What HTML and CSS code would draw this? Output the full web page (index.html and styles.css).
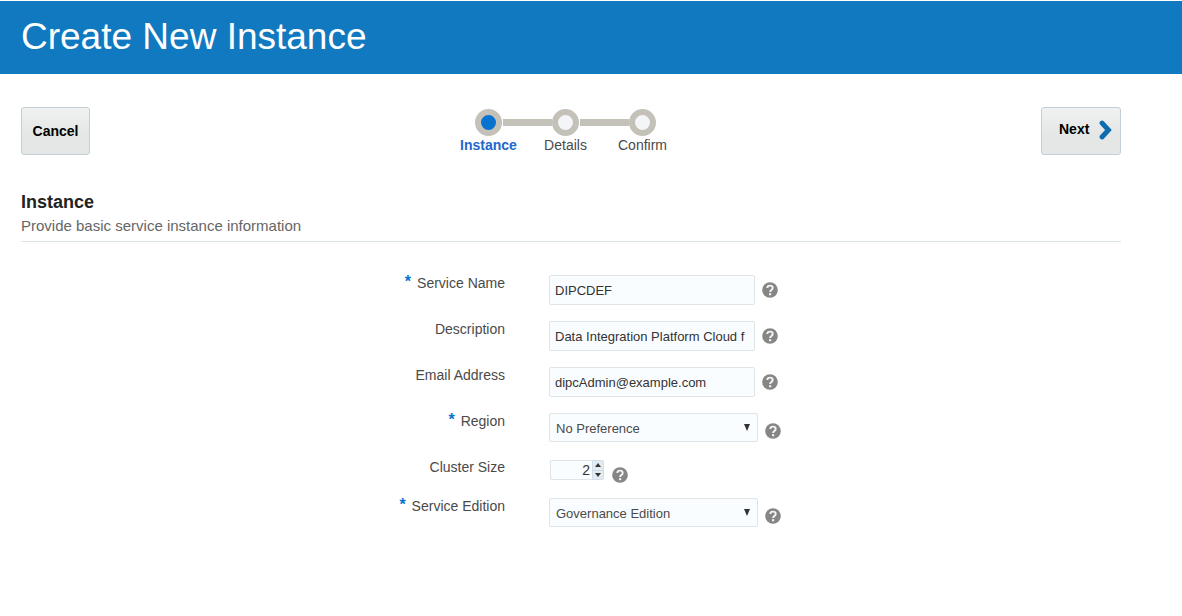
FILE: index.html
```html
<!DOCTYPE html>
<html lang="en">
<head>
<meta charset="utf-8">
<title>Create New Instance</title>
<link rel="stylesheet" href="styles.css">
</head>
<body>
<svg class="sprite" aria-hidden="true">
  <symbol id="help" viewBox="0 0 16 16">
    <circle cx="8" cy="8" r="7.8" fill="#868686"/>
    <path d="M5.3 6C5.3 4.300 6.400 3.600 8 3.600s2.700.8 2.700 2.300c0 2-2.600 2-2.600 4" fill="none" stroke="#f4f4f4" stroke-width="1.900"/>
    <rect x="7" y="11.200" width="2.200" height="2" fill="#f4f4f4"/>
  </symbol>
</svg>
<header class="banner"><h1 class="banner-title">Create New Instance</h1></header>
<main class="page">
  <div class="train">
    <button class="btn btn-cancel" type="button">Cancel</button>
    <ol class="steps">
      <li class="step current" aria-current="step"><span class="marker"><i class="line"></i><i class="dot"></i><i class="line"></i></span>Instance</li>
      <li class="step"><span class="marker"><i class="line"></i><i class="dot"></i><i class="line"></i></span>Details</li>
      <li class="step"><span class="marker"><i class="line"></i><i class="dot"></i><i class="line"></i></span>Confirm</li>
    </ol>
    <button class="btn btn-next" type="button">Next
      <svg class="chevron" width="13" height="20" viewBox="0 0 13 20" aria-hidden="true"><path d="M3 3l6.500 7L3 17" fill="none" stroke="#0b6cb0" stroke-width="4.800" stroke-linecap="round" stroke-linejoin="miter"/></svg>
    </button>
  </div>
  <div class="section-head">
    <h2 class="section-title">Instance</h2>
    <p class="section-note">Provide basic service instance information</p>
  </div>
  <form class="form">
    <div class="row">
      <label class="label" for="name"><span class="req">*</span>Service Name</label>
      <div class="field"><input class="text" id="name" type="text" value="DIPCDEF"><svg class="help"><use href="#help"/></svg></div>
    </div>
    <div class="row">
      <label class="label" for="desc">Description</label>
      <div class="field"><input class="text" id="desc" type="text" value="Data Integration Platform Cloud f"><svg class="help"><use href="#help"/></svg></div>
    </div>
    <div class="row">
      <label class="label" for="email">Email Address</label>
      <div class="field"><input class="text" id="email" type="text" value="dipcAdmin@example.com"><svg class="help"><use href="#help"/></svg></div>
    </div>
    <div class="row">
      <label class="label" for="region"><span class="req">*</span>Region</label>
      <div class="field field-select">
        <span class="select-box"><select class="select" id="region"><option>No Preference</option></select><svg class="arrow" viewBox="0 0 6 7"><path d="M0 0h6L3 7z" fill="#333"/></svg></span>
        <svg class="help"><use href="#help"/></svg>
      </div>
    </div>
    <div class="row row-short">
      <label class="label" for="size">Cluster Size</label>
      <div class="field field-spin">
        <span class="spin"><input class="number" id="size" type="number" value="2"><span class="spin-buttons">
          <button class="spin-btn" type="button" aria-label="Increase"><svg width="6" height="4" viewBox="0 0 6 4"><path d="M0 4h6L3 0z" fill="#333"/></svg></button>
          <button class="spin-btn" type="button" aria-label="Decrease"><svg width="6" height="4" viewBox="0 0 6 4"><path d="M0 0h6L3 4z" fill="#333"/></svg></button>
        </span></span>
        <svg class="help"><use href="#help"/></svg>
      </div>
    </div>
    <div class="row">
      <label class="label" for="edition"><span class="req">*</span>Service Edition</label>
      <div class="field field-select">
        <span class="select-box"><select class="select" id="edition"><option>Governance Edition</option></select><svg class="arrow" viewBox="0 0 6 7"><path d="M0 0h6L3 7z" fill="#333"/></svg></span>
        <svg class="help"><use href="#help"/></svg>
      </div>
    </div>
  </form>
</main>
</body>
</html>
```
FILE: styles.css
```css
* { box-sizing: border-box; }
body {
  margin: 0;
  background: #fff;
  color: #4a4a4a;
  font: 14px/16px "Liberation Sans", Arial, sans-serif;
}
h1, h2, p, ol { margin: 0; padding: 0; }
input, select, button { font-family: inherit; margin: 0; }
.sprite { display: none; }

.banner {
  padding: 14px 21px 15px;
  border-top: 1px solid #fff;
  background: #1079c0;
}
.banner-title { color: #fff; font-size: 37px; line-height: 44px; font-weight: 400; }

.page { padding: 33px 61px 32px 21px; }
.train { display: flex; justify-content: space-between; }
.btn {
  height: 48px;
  padding: 0 10px;
  border: 1px solid #c4ced7;
  border-radius: 3px;
  background: linear-gradient(#f0f2f2, #e4e7e6 55%, #e4e7e6);
  color: #000;
  font-size: 14px;
  font-weight: 700;
}
.btn-cancel { min-width: 69px; }
.btn-next {
  display: flex;
  align-items: center;
  justify-content: space-between;
  min-width: 80px;
  padding: 0 8px 4px 17px;
}
.chevron { margin-top: 2px; }

.steps { display: grid; grid-template-columns: repeat(3, 77px); list-style: none; padding-top: 2px; }
.step { text-align: center; }
.current { color: #2267cc; font-weight: 700; }
.marker { display: flex; align-items: center; height: 27px; margin-bottom: 1px; }
.line { flex: 1; height: 7px; background: #c4c1b8; }
.dot {
  width: 27px;
  height: 27px;
  border: 6px solid #c4c1b8;
  border-radius: 50%;
  background: #f3f5f6;
}
.dot + .line { margin-left: 1px; }
.current .dot { background: #0772cf; }
.step:first-child .line:first-child,
.step:last-child .line:last-child { visibility: hidden; }

.section-head { padding: 36px 0 5px; border-bottom: 1px solid #dbe3e3; }
.section-title { color: #222; font-size: 18px; line-height: 22px; }
.section-note { padding-top: 3px; color: #666; font-size: 15px; line-height: 20px; }

.form { display: grid; gap: 16px; padding-top: 33px; }
.row { display: grid; grid-template-columns: 44% 48%; column-gap: 4%; min-height: 30px; }
.row-short { height: 23px; min-height: 0; }
.label { text-align: right; }
.req { margin-right: 6px; color: #0772cf; font-size: 16px; font-weight: 700; line-height: 12px; vertical-align: 1px; }
.field { display: flex; align-items: flex-start; gap: 7px; }
.text, .select {
  border: 1px solid #dfe4e7;
  border-radius: 2px;
  background: #fafdff;
  color: #333;
  font-size: 13px;
}
.text { width: 206px; height: 30px; padding: 0 5px; }
.help { width: 16px; height: 16px; margin-top: 7px; }
.field-select .help { margin-top: 10px; }
.select-box { display: grid; width: 209px; }
.select { grid-area: 1 / 1; height: 29px; padding: 2px 20px 0 6px; appearance: none; color: #4a4a4a; }
.arrow { grid-area: 1 / 1; width: 6px; height: 7px; justify-self: end; align-self: center; margin-right: 8px; pointer-events: none; }

.field-spin { gap: 8px; }
.field-spin .help { margin-top: 8px; }
.spin { display: flex; height: 20px; margin: 1px 0 0 1px; }
.number {
  width: 42px;
  padding: 0 2px;
  border: 1px solid #dfe4e7;
  border-right: 0;
  border-radius: 2px 0 0 2px;
  background: #fafdff;
  color: #333;
  font-size: 14px;
  text-align: right;
  appearance: textfield;
}
.number::-webkit-inner-spin-button { appearance: none; margin: 0; }
.spin-buttons { display: grid; width: 12px; border: 1px solid #d3dee8; border-radius: 0 2px 2px 0; background: #e3ebf2; }
.spin-btn { display: grid; place-items: center; padding: 0; border: 0; background: none; }
.spin-btn + .spin-btn { border-top: 1px solid #cfdbe5; }
```
